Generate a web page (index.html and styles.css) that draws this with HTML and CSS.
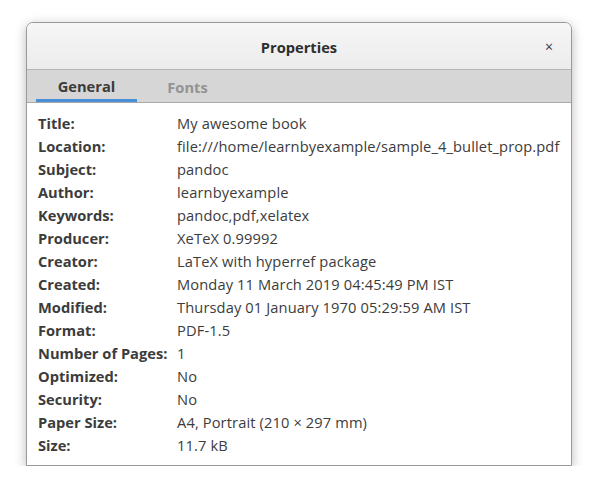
FILE: index.html
```html
<!DOCTYPE html>
<html>
<head>
<meta charset="utf-8">
<link rel="stylesheet" href="styles.css">
</head>
<body>
<div class="window">
  <div class="titlebar">
    <span class="title">Properties</span>
    <span class="close">×</span>
  </div>
  <div class="tabs">
    <div class="tab active">General</div>
    <div class="tab">Fonts</div>
  </div>
  <div class="props">
    <div class="k">Title:</div><div class="v">My awesome book</div>
    <div class="k">Location:</div><div class="v">file:///home/learnbyexample/sample_4_bullet_prop.pdf</div>
    <div class="k">Subject:</div><div class="v">pandoc</div>
    <div class="k">Author:</div><div class="v">learnbyexample</div>
    <div class="k">Keywords:</div><div class="v">pandoc,pdf,xelatex</div>
    <div class="k">Producer:</div><div class="v">XeTeX 0.99992</div>
    <div class="k">Creator:</div><div class="v">LaTeX with hyperref package</div>
    <div class="k">Created:</div><div class="v">Monday 11 March 2019 04:45:49 PM IST</div>
    <div class="k">Modified:</div><div class="v">Thursday 01 January 1970 05:29:59 AM IST</div>
    <div class="k">Format:</div><div class="v">PDF-1.5</div>
    <div class="k">Number of Pages:</div><div class="v">1</div>
    <div class="k">Optimized:</div><div class="v">No</div>
    <div class="k">Security:</div><div class="v">No</div>
    <div class="k">Paper Size:</div><div class="v">A4, Portrait (210 × 297 mm)</div>
    <div class="k">Size:</div><div class="v">11.7 kB</div>
  </div>
</div>
</body>
</html>
```
FILE: styles.css
```css
html, body {
  margin: 0;
  padding: 0;
  background: #ffffff;
}
body {
  padding: 22px 0 0 26px;
  font-family: "Open Sans", "Noto Sans", sans-serif;
  color: #3c3c3c;
}
.window {
  width: 546px;
  height: 444px;
  box-sizing: border-box;
  border: 1px solid #9a9a9a;
  border-radius: 7px 7px 0 0;
  background: #ffffff;
  box-shadow: 0 3px 12px rgba(0,0,0,0.28);
  overflow: hidden;
  display: flex;
  flex-direction: column;
}
.titlebar {
  height: 46px;
  flex: none;
  display: flex;
  align-items: center;
  justify-content: center;
  position: relative;
  background: linear-gradient(#f6f6f6, #ececec);
  border-bottom: 1px solid #b5b5b5;
}
.title {
  font-weight: 700;
  font-size: 14.67px;
  color: #2e2e2e;
  padding-top: 2px;
}
.close {
  position: absolute;
  right: 18px;
  top: 14px;
  font-size: 14px;
  color: #3a3a46;
}
.tabs {
  height: 32px;
  flex: none;
  display: flex;
  padding-left: 9px;
  background: #d6d6d6;
  border-bottom: 1px solid #a9a9a9;
}
.tab {
  width: 101px;
  box-sizing: border-box;
  text-align: center;
  font-weight: 700;
  font-size: 14.67px;
  line-height: 34px;
  color: #939393;
}
.tab.active {
  color: #3c3c3c;
  border-bottom: 3px solid #4a90d9;
  line-height: 33px;
}
.props {
  display: grid;
  grid-template-columns: 139px 1fr;
  grid-auto-rows: 23px;
  padding: 9px 0 0 11px;
  font-size: 14.67px;
  line-height: 23px;
}
.k {
  font-weight: 700;
}
.v {
  white-space: nowrap;
  letter-spacing: 0.12px;
}
```
